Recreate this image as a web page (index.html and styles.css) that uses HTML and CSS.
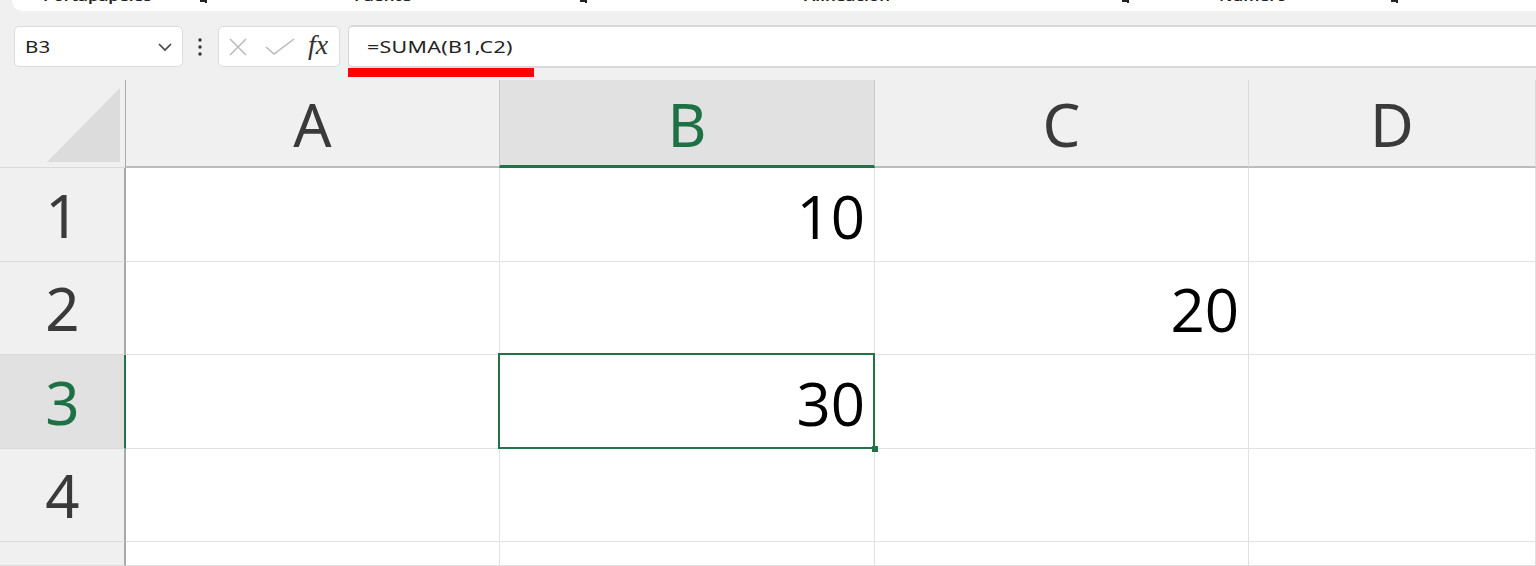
FILE: index.html
```html
<!DOCTYPE html>
<html lang="es">
<head>
  <meta charset="UTF-8">
  <meta name="viewport" content="width=device-width, initial-scale=1">
  <title>Libro1 - Excel</title>
  <link rel="stylesheet" href="styles.css">
</head>

<body>

  <!-- Ribbon strip (cut off at the top) -->
  <div class="ribbon">
    <span class="group-label lbl-clip">Portapapeles</span>
    <span class="launcher l-clip"></span>
    <span class="group-label lbl-font">Fuente</span>
    <span class="launcher l-font"></span>
    <span class="group-label lbl-align">Alineación</span>
    <span class="launcher l-align"></span>
    <span class="group-label lbl-num">Número</span>
    <span class="launcher l-num"></span>
  </div>

  <!-- Formula bar -->
  <div class="formula-bar">
    <div class="name-box">
      <span class="bar-text">B3</span>
      <svg class="chevron" width="16" height="10" viewBox="0 0 16 10">
        <polyline points="2,2 8,8 14,2" fill="none" stroke="#444" stroke-width="1.6"/>
      </svg>
    </div>

    <svg class="dots" width="6" height="20" viewBox="0 0 6 20">
      <circle cx="3" cy="3" r="1.7" fill="#333"/>
      <circle cx="3" cy="10" r="1.7" fill="#333"/>
      <circle cx="3" cy="17" r="1.7" fill="#333"/>
    </svg>

    <div class="fx-buttons">
      <svg class="cancel" width="20" height="20" viewBox="0 0 20 20">
        <path d="M2 2 L18 18 M18 2 L2 18" stroke="#b9b9b9" stroke-width="1.5" fill="none"/>
      </svg>
      <svg class="enter" width="30" height="18" viewBox="0 0 30 18">
        <polyline points="1,9 9,16 29,1" stroke="#b9b9b9" stroke-width="1.5" fill="none"/>
      </svg>
      <span class="fx">fx</span>
    </div>

    <div class="formula-input">
      <span class="bar-text wide">=SUMA(B1,C2)</span>
      <div class="mark"></div>
    </div>
  </div>

  <!-- Sheet grid -->
  <div class="sheet">
    <div class="corner"><div class="triangle"></div></div>
    <div class="col-head">A</div>
    <div class="col-head active">B</div>
    <div class="col-head">C</div>
    <div class="col-head">D</div>

    <div class="row-head">1</div>
    <div class="cell"></div>
    <div class="cell">10</div>
    <div class="cell"></div>
    <div class="cell"></div>

    <div class="row-head">2</div>
    <div class="cell"></div>
    <div class="cell"></div>
    <div class="cell">20</div>
    <div class="cell"></div>

    <div class="row-head active">3</div>
    <div class="cell"></div>
    <div class="cell selected">30</div>
    <div class="cell"></div>
    <div class="cell"></div>

    <div class="row-head">4</div>
    <div class="cell"></div>
    <div class="cell"></div>
    <div class="cell"></div>
    <div class="cell"></div>

    <div class="row-head"></div>
    <div class="cell"></div>
    <div class="cell"></div>
    <div class="cell"></div>
    <div class="cell"></div>
  </div>

</body>
</html>
```

FILE: styles.css
```css
body {
  margin: 0;
  background-color: #f0f0f0;
  font-family: 'Noto Sans', 'Open Sans', sans-serif;
  color: #333;
  overflow: hidden;
  height: 566px;
}

/* Ribbon strip: only the bottom of the group names shows */
.ribbon {
  height: 11px;
  margin-left: 12px;
  background-color: white;
  border-bottom-left-radius: 10px;
  overflow: hidden;
  display: grid;
  grid-template-columns: 31px 157px 154px 226px 224px 318px 97px 172px 1fr;
  grid-template-rows: 11px;
  align-items: end;
}

.group-label {
  font-size: 13px;
  line-height: 13px;
  font-weight: 600;
  color: #222;
  margin-bottom: 8px;
  white-space: nowrap;
  transform: scaleX(1.3);
  transform-origin: left bottom;
}

.launcher {
  width: 7px;
  height: 3px;
  border-top: 2px solid #222;
  border-right: 2px solid #222;
  box-sizing: border-box;
  margin-bottom: 8px;
}

.lbl-clip { grid-column: 2; }
.l-clip { grid-column: 3; }
.lbl-font { grid-column: 4; }
.l-font { grid-column: 5; }
.lbl-align { grid-column: 6; }
.l-align { grid-column: 7; }
.lbl-num { grid-column: 8; }
.l-num { grid-column: 9; }

/* Formula bar */
.formula-bar {
  display: flex;
  align-items: center;
  height: 43px;
  margin-top: 14px;
}

.name-box {
  width: 169px;
  height: 41px;
  margin-left: 14px;
  box-sizing: border-box;
  background: white;
  border: 1px solid #dcdcdc;
  border-radius: 5px;
  display: flex;
  align-items: center;
  justify-content: space-between;
  padding: 0 9px 0 10px;
}

.bar-text {
  font-size: 16px;
  color: #222;
  display: inline-block;
  transform: scaleX(1.28);
  transform-origin: left center;
  letter-spacing: 0.2px;
}

.bar-text.wide {
  transform: scaleX(1.34);
}

.chevron {
  display: block;
}

.dots {
  margin-left: 14px;
  display: block;
}

.fx-buttons {
  width: 122px;
  height: 41px;
  margin-left: 15px;
  box-sizing: border-box;
  background: white;
  border: 1px solid #dcdcdc;
  border-radius: 5px;
  display: flex;
  align-items: center;
  padding-left: 9px;
}

.enter {
  margin-left: 17px;
}

.fx {
  font-family: 'Liberation Serif', 'DejaVu Serif', serif;
  font-style: italic;
  font-size: 28px;
  color: #333;
  margin-left: 13px;
  line-height: 1;
  margin-top: -4px;
}

.formula-input {
  flex: 1;
  height: 43px;
  margin-left: 8px;
  box-sizing: border-box;
  background: white;
  border-top: 2px solid #d8d8d8;
  border-bottom: 2px solid #d8d8d8;
  border-left: 1px solid #d8d8d8;
  border-radius: 5px 0 0 5px;
  display: flex;
  align-items: center;
  padding-left: 18px;
  position: relative;
}

/* red annotation under the formula */
.mark {
  position: absolute;
  left: -1px;
  top: 41px;
  width: 186px;
  height: 9px;
  background-color: #ff0000;
}

/* Sheet */
.sheet {
  margin-top: 12px;
  display: grid;
  grid-template-columns: 126px 374px 375px 374px 1fr;
  grid-template-rows: 88px 94px 93px 94px 93px 24px;
}

.corner {
  background-color: #f0f0f0;
  border-right: 1px solid #a9a9a9;
  border-bottom: 1px solid #dadada;
  position: relative;
}

.triangle {
  position: absolute;
  left: 47px;
  top: 8px;
  width: 0;
  height: 0;
  border-left: 73px solid transparent;
  border-bottom: 74px solid #dcdcdc;
}

.col-head {
  background-color: #f0f0f0;
  border-right: 1px solid #dcdcdc;
  border-bottom: 2px solid #bcbcbc;
  display: flex;
  align-items: center;
  justify-content: center;
  font-size: 60px;
  color: #3a3a3a;
  padding-top: 2px;
  box-sizing: border-box;
}

.col-head.active {
  background-color: #e1e1e1;
  color: #1e7145;
  border-left: 1px solid #c8c8c8;
  border-right: 1px solid #c8c8c8;
  border-bottom: 3px solid #217346;
  margin-left: -1px;
}

.row-head {
  background-color: #f0f0f0;
  border-right: 2px solid #a9a9a9;
  border-bottom: 1px solid #dadada;
  display: flex;
  align-items: center;
  justify-content: center;
  font-size: 60px;
  color: #3a3a3a;
  box-sizing: border-box;
  padding-left: 1px;
}

.row-head.active {
  background-color: #e1e1e1;
  color: #1e7145;
  border-right: 2px solid #217346;
}

.cell {
  background-color: white;
  border-right: 1px solid #e1e1e1;
  border-bottom: 1px solid #e1e1e1;
  box-sizing: border-box;
  display: flex;
  align-items: flex-end;
  justify-content: flex-end;
  font-family: 'Open Sans', 'Noto Sans', sans-serif;
  font-size: 60px;
  line-height: 60px;
  color: #000;
  padding: 0 9px 15px 0;
}

.cell.selected {
  position: relative;
}

.cell.selected::after {
  content: "";
  position: absolute;
  left: -2px;
  top: -2px;
  right: -1px;
  bottom: -1px;
  border: 2px solid #217346;
}

.cell.selected::before {
  content: "";
  position: absolute;
  right: -4px;
  bottom: -4px;
  width: 6px;
  height: 6px;
  background-color: #217346;
  z-index: 1;
}
```
